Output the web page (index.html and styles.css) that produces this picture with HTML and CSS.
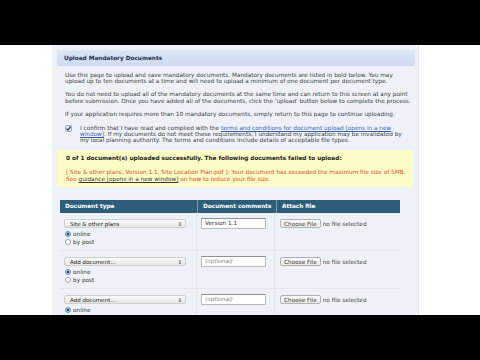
FILE: index.html
```html
<!DOCTYPE html>
<html>
<head>
<meta charset="utf-8">
<link rel="stylesheet" href="styles.css">
</head>
<body>
<div class="screen">
  <div class="letterbox"></div>
  <div class="page">
    <div class="panel">
      <div class="panel-head">Upload Mandatory Documents</div>
      <p class="intro first">Use this page to upload and save mandatory documents. Mandatory documents are listed in bold below. You may<br>upload up to ten documents at a time and will need to upload a minimum of one document per document type.</p>
      <p class="intro">You do not need to upload all of the mandatory documents at the same time and can return to this screen at any point<br>before submission. Once you have added all of the documents, click the 'upload' button below to complete the process.</p>
      <p class="intro">If your application requires more than 10 mandatory documents, simply return to this page to continue uploading.</p>
      <div class="confirm">
        <span class="checkbox"><svg viewBox="0 0 7 7" width="7" height="7"><rect x="0.5" y="0.5" width="6" height="6" rx="1" fill="#dfe4ec" stroke="#8e99a8" stroke-width="0.8"/><path d="M1.6 3.6 L3 5 L5.6 1.6" fill="none" stroke="#2d3f5c" stroke-width="1.2"/></svg></span>
        <p class="confirm-text">I confirm that I have read and complied with the <a class="link">terms and conditions for document upload [opens in a new<br>window]</a>. If my documents do not meet these requirements, I understand my application may be invalidated by<br>my local planning authority. The terms and conditions include details of acceptable file types.</p>
      </div>
      <div class="notice">
        <p class="notice-title">0 of 1 document(s) uploaded successfully. The following documents failed to upload:</p>
        <p class="notice-error">[ Site &amp; other plans, Version 1.1, Site Location Plan.pdf ]: Your document has exceeded the maximum file size of 5MB.<br>See <a class="link dark">guidance [opens in a new window]</a> on how to reduce your file size.</p>
      </div>
      <div class="table">
        <div class="thead">
          <div class="th c1">Document type</div>
          <div class="th c2">Document comments</div>
          <div class="th c3">Attach file</div>
        </div>
        <div class="row">
          <div class="td c1">
            <div class="select"><span>Site &amp; other plans</span><span class="arrows">&#8661;</span></div>
            <div class="radio"><span class="dot on"></span>online</div>
            <div class="radio"><span class="dot"></span>by post</div>
          </div>
          <div class="td c2"><div class="input">Version 1.1</div></div>
          <div class="td c3"><div class="file"><span class="btn">Choose File</span><span>no file selected</span></div></div>
        </div>
        <div class="row">
          <div class="td c1">
            <div class="select"><span>Add document...</span><span class="arrows">&#8661;</span></div>
            <div class="radio"><span class="dot on"></span>online</div>
            <div class="radio"><span class="dot"></span>by post</div>
          </div>
          <div class="td c2"><div class="input placeholder">(optional)</div></div>
          <div class="td c3"><div class="file"><span class="btn">Choose File</span><span>no file selected</span></div></div>
        </div>
        <div class="row">
          <div class="td c1">
            <div class="select"><span>Add document...</span><span class="arrows">&#8661;</span></div>
            <div class="radio"><span class="dot on"></span>online</div>
          </div>
          <div class="td c2"><div class="input placeholder">(optional)</div></div>
          <div class="td c3"><div class="file"><span class="btn">Choose File</span><span>no file selected</span></div></div>
        </div>
      </div>
    </div>
  </div>
  <div class="letterbox"></div>
</div>
</body>
</html>
```
FILE: styles.css
```css
html, body {
  margin: 0;
  padding: 0;
  background: #000;
}
.screen {
  width: 480px;
  height: 360px;
  display: flex;
  flex-direction: column;
  overflow: hidden;
  font-family: "DejaVu Sans", Verdana, sans-serif;
  font-size: 5.75px;
  color: #3a3f47;
}
.letterbox {
  height: 45px;
  flex: none;
  background: #000;
}
.page {
  height: 270px;
  flex: none;
  background: #fff;
  padding-left: 52px;
  overflow: hidden;
}
.panel {
  width: 358px;
  height: 100%;
  padding: 5px 3px 0 5px;
  background: #eef2f8;
  border-right: 1px solid #e3e7ed;
}
.panel-head {
  height: 16px;
  line-height: 16px;
  padding-left: 7px;
  border-radius: 2px;
  background: linear-gradient(#dce6f5, #ccdaef);
  font-weight: bold;
  color: #22304a;
}
p { margin: 0; }
.intro {
  padding-left: 8px;
  line-height: 6.8px;
  margin-bottom: 6.2px;
}
.intro.first { margin-top: 5.6px; }
.confirm {
  display: flex;
  padding-left: 8px;
  gap: 8px;
  margin-top: 7px;
}
.checkbox {
  width: 7px;
  height: 7px;
  flex: none;
}
.checkbox svg { display: block; }
.confirm-text {
  line-height: 6.2px;
}
.link {
  color: #3c63a8;
  text-decoration: underline;
}
.link.dark { color: #3b3b3b; }
.notice {
  margin-top: 6px;
  width: 347px;
  padding: 5px 0 4px 9px;
  background: #fdfbc6;
}
.notice-title {
  font-weight: bold;
  color: #222;
  line-height: 7px;
  margin-bottom: 7px;
}
.notice-error {
  color: #d2541f;
  line-height: 7.4px;
}
.table {
  margin: 13px 0 0 3px;
  width: 340px;
}
.thead {
  display: flex;
  height: 13px;
  background: #2d5e79;
  color: #fff;
  font-weight: bold;
  line-height: 13px;
}
.th { padding-left: 5px; }
.thead .c1, .thead .c2 { border-right: 1px solid #7d9bb0; }
.c1 { width: 132px; flex: none; }
.c2 { width: 73px; flex: none; }
.c3 { flex: 1; }
.row {
  display: flex;
  border-bottom: 1px solid #e3e8f0;
}
.td {
  padding: 6px 0 4.5px 4px;
}
.row .c1, .row .c2 { border-right: 1px solid #e2e7ef; }
.select {
  width: 122px;
  height: 9px;
  border: 1px solid #cfcfcf;
  border-radius: 2px;
  background: linear-gradient(#fafafa, #e6e6e6);
  display: flex;
  justify-content: space-between;
  align-items: center;
  padding: 0 3px 0 5px;
  box-sizing: border-box;
  color: #222;
  margin-bottom: 1.5px;
  font-size: 5.5px;
}
.arrows { font-size: 5px; color: #333; }
.radio {
  height: 8px;
  line-height: 8px;
  display: flex;
  align-items: center;
  gap: 2px;
  padding-left: 1px;
  color: #333;
}
.dot {
  width: 4px;
  height: 4px;
  border-radius: 50%;
  border: 0.8px solid #9aa3ad;
  background: #fff;
  box-sizing: content-box;
}
.dot.on {
  background: radial-gradient(circle, #2f4f7f 0 35%, #9cc0ea 45%);
  border-color: #6f8fb8;
}
.input {
  width: 65px;
  height: 11px;
  box-sizing: border-box;
  border: 1px solid #b9b9b9;
  border-top-color: #8f8f8f;
  background: #fff;
  line-height: 9px;
  padding-left: 3px;
  color: #333;
  margin-top: -1px;
}
.input.placeholder { font-style: italic; color: #8a8a8a; }
.td.c3 { padding-left: 5px; }
.file {
  display: flex;
  align-items: center;
  gap: 2px;
  color: #444;
}
.btn {
  height: 9px;
  line-height: 8px;
  padding: 0 3px;
  box-sizing: border-box;
  border: 1px solid #b0b0b0;
  border-radius: 2px;
  background: linear-gradient(#fdfdfd, #ececec);
  color: #333;
}
```
